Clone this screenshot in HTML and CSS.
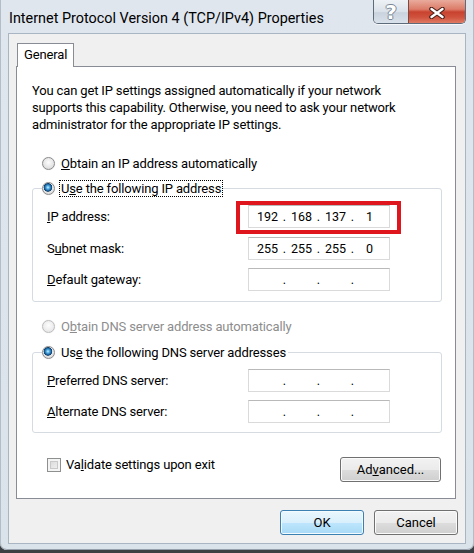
FILE: index.html
```html
<!DOCTYPE html>
<html lang="en">
<head>
    <meta charset="UTF-8">
    <meta name="viewport" content="width=device-width, initial-scale=1.0">
    <title>Internet Protocol Version 4 (TCP/IPv4) Properties</title>
    <link rel="stylesheet" href="styles.css">
</head>
<body>

<div class="window">
    <div class="titlebar">
        <span class="title">Internet Protocol Version 4 (TCP/IPv4) Properties</span>
        <div class="caption">
            <span class="cap-btn help">?</span>
            <span class="cap-btn close">
                <svg width="16" height="12" viewBox="0 0 16 12">
                    <path d="M2.5 2 L13.5 10 M13.5 2 L2.5 10" stroke="#4a1f19" stroke-width="4.6" stroke-linecap="round"/>
                    <path d="M2.5 2 L13.5 10 M13.5 2 L2.5 10" stroke="#fff" stroke-width="2.4" stroke-linecap="round"/>
                </svg>
            </span>
        </div>
    </div>

    <div class="client">
        <div class="tabs">
            <span class="tab">General</span>
        </div>

        <div class="panel">
            <p class="intro">You can get IP settings assigned automatically if your network<br>supports this capability. Otherwise, you need to ask your network<br>administrator for the appropriate IP settings.</p>

            <div class="option"><span class="radio"></span><span><u>O</u>btain an IP address automatically</span></div>

            <fieldset class="group">
                <legend class="legend"><span class="radio checked"></span><span class="focus">U<u>s</u>e the following IP address</span></legend>
                <div class="rows">
                    <div class="row">
                        <span><u>I</u>P address:</span>
                        <div class="ip marked"><span>192</span><i>.</i><span>168</span><i>.</i><span>137</span><i>.</i><span>1</span></div>
                    </div>
                    <div class="row">
                        <span>S<u>u</u>bnet mask:</span>
                        <div class="ip"><span>255</span><i>.</i><span>255</span><i>.</i><span>255</span><i>.</i><span>0</span></div>
                    </div>
                    <div class="row">
                        <span><u>D</u>efault gateway:</span>
                        <div class="ip"><span></span><i>.</i><span></span><i>.</i><span></span><i>.</i><span></span></div>
                    </div>
                </div>
            </fieldset>

            <div class="option option-dns disabled"><span class="radio"></span><span>O<u>b</u>tain DNS server address automatically</span></div>

            <fieldset class="group group-dns">
                <legend class="legend"><span class="radio checked"></span><span class="focus off">Us<u>e</u> the following DNS server addresses</span></legend>
                <div class="rows rows-dns">
                    <div class="row">
                        <span><u>P</u>referred DNS server:</span>
                        <div class="ip"><span></span><i>.</i><span></span><i>.</i><span></span><i>.</i><span></span></div>
                    </div>
                    <div class="row">
                        <span><u>A</u>lternate DNS server:</span>
                        <div class="ip"><span></span><i>.</i><span></span><i>.</i><span></span><i>.</i><span></span></div>
                    </div>
                </div>
            </fieldset>

            <div class="footer">
                <div class="check-label"><span class="checkbox"></span><span>Va<u>l</u>idate settings upon exit</span></div>
                <button class="btn advanced">Ad<u>v</u>anced...</button>
            </div>
        </div>

        <div class="actions">
            <button class="btn default">OK</button>
            <button class="btn">Cancel</button>
        </div>
    </div>
</div>

</body>
</html>
```

FILE: styles.css
```css
*, *::before, *::after {
    box-sizing: border-box;
}
html, body {
    margin: 0;
}
body {
    background-color: #3a3f44;
    font-family: Roboto, "Open Sans", sans-serif;
    font-size: 13px;
    letter-spacing: -0.15px;
    color: #000;
}
.window {
    width: 474px;
    height: 550px;
    padding: 0 8px 6px;
    display: flex;
    flex-direction: column;
    background: linear-gradient(to bottom, #dfe6ee, #dae2ea);
    border-radius: 0 0 7px 7px;
    box-shadow: inset 1px 0 0 #b3bdc8, inset -1px 0 0 #b3bdc8, inset 0 -1px 0 #95a0ac;
}

/* title bar */
.titlebar {
    height: 33px;
    display: flex;
    justify-content: space-between;
    align-items: flex-start;
}
.title {
    font-size: 14.4px;
    letter-spacing: 0;
    line-height: 20px;
    margin: 9px 0 0 1px;
}
.caption {
    display: flex;
    height: 24px;
    border: 1px solid #5d6b7b;
    border-top: 0;
    border-radius: 0 0 5px 5px;
    overflow: hidden;
    box-shadow: 0 1px 0 rgba(255, 255, 255, 0.7);
}
.cap-btn {
    display: flex;
    align-items: center;
    justify-content: center;
}
.help {
    width: 34px;
    background: linear-gradient(to bottom, #eef2f6, #dae1e9 50%, #c9d3de 55%, #d9e1ea);
    color: #fff;
    font: bold 20px "DejaVu Sans", sans-serif;
    text-shadow: 1px 0 #7a8694, -1px 0 #7a8694, 0 1px #7a8694, 0 -1px #7a8694;
    padding-top: 1px;
}
.close {
    width: 57px;
    border-left: 1px solid #7a4a44;
    background: linear-gradient(to bottom, #e9ab9c, #dc7c69 40%, #c9432f 52%, #cf523d 75%, #e07b63);
    padding-top: 2px;
}

/* client area */
.client {
    flex: 1;
    display: flex;
    flex-direction: column;
    background-color: #f0f0f0;
    border: 1px solid #a9b5c2;
    padding: 9px 7px 8px;
}
.tabs {
    display: flex;
    padding-left: 1px;
}
.tab {
    position: relative;
    z-index: 1;
    height: 24px;
    margin-bottom: -1px;
    padding: 2px 6px 0;
    line-height: 17px;
    background-color: #fff;
    border: 1px solid #898c95;
    border-bottom: 0;
}
.panel {
    margin-right: 2px;
    padding: 15px 13px 16px 15px;
    background-color: #fff;
    border: 1px solid #898c95;
}
.intro {
    margin: 0;
    line-height: 17px;
}

/* radios */
.option {
    display: flex;
    align-items: center;
    gap: 6px;
    height: 25px;
    padding-left: 10px;
    margin-top: 17.5px;
}
.option-dns {
    margin-top: 11.5px;
}
.disabled {
    color: #8d8d8d;
}
.radio {
    width: 13px;
    height: 13px;
    flex: none;
    border-radius: 50%;
    border: 1px solid #8b8b8b;
    background: radial-gradient(circle at 50% 40%, #fdfdfd, #e6e6e6 55%, #cfcfcf);
    box-shadow: 0 0 1px rgba(0, 0, 0, 0.15);
}
.disabled .radio {
    border-color: #bdbdbd;
    background: radial-gradient(circle at 50% 40%, #fdfdfd, #ececec 60%, #e0e0e0);
}
.radio.checked {
    background:
        radial-gradient(circle at 45% 40%, #d4f0ff 0, #58b2e6 1.5px, #1b64a0 3.2px, #0d3d6b 4px, transparent 4.6px),
        radial-gradient(circle at 50% 40%, #fdfdfd, #e6e6e6 55%, #cfcfcf);
}

/* group boxes */
.group {
    margin: 4.5px 0 0;
    padding: 8px 14px 10px;
    min-width: 0;
    border: 1px solid #d5dbe0;
    border-radius: 3px;
}
.group-dns {
    margin-top: 5px;
    padding: 8.5px 14px 9px;
}
.legend {
    display: flex;
    align-items: center;
    gap: 4px;
    padding: 0;
    margin-left: -5px;
}
.focus {
    line-height: 15px;
    padding: 0 1px;
    border: 1px dotted #000;
}
.focus.off {
    border-color: transparent;
}
.rows {
    display: flex;
    flex-direction: column;
    gap: 8.5px;
}
.rows-dns {
    gap: 8px;
}
.row {
    display: grid;
    grid-template-columns: 201px 142px;
    align-items: center;
}

/* ip address control */
.ip {
    position: relative;
    height: 23px;
    display: grid;
    grid-template-columns: 27px 7px 27px 7px 27px 7px 27px;
    align-items: center;
    padding-left: 5px;
    font-size: 12.5px;
    letter-spacing: 0;
    text-align: center;
    background-color: #fff;
    border: 1px solid #dadada;
    border-top-color: #b9b9b9;
}
.ip i {
    font-style: normal;
}
.ip.marked::after {
    content: "";
    position: absolute;
    left: -13px;
    top: -5px;
    width: 165px;
    height: 33px;
    border: 4px solid #e0161f;
}

/* footer */
.footer {
    display: flex;
    justify-content: space-between;
    align-items: flex-start;
    margin-top: 24px;
}
.check-label {
    display: flex;
    align-items: center;
    gap: 5px;
    height: 15px;
    padding-left: 15px;
}
.checkbox {
    width: 14px;
    height: 14px;
    border: 1px solid #8e8f8f;
    background: linear-gradient(135deg, #d4d4d4, #f6f6f6);
    box-shadow: inset 0 0 0 2px #f4f4f4, inset 0 0 0 3px #c9c9c9;
}
.btn {
    height: 25px;
    width: 84px;
    padding: 0;
    font-family: Roboto, "Open Sans", sans-serif;
    font-size: 13px;
    color: #000;
    border: 1px solid #707070;
    border-radius: 3px;
    background: linear-gradient(to bottom, #f2f2f2, #ebebeb 50%, #dddddd 51%, #cfcfcf);
    box-shadow: inset 0 0 0 1px #fbfbfb;
}
.advanced {
    width: 101px;
    margin-right: 1px;
}
.btn.default {
    border-color: #3c7fb1;
    background: linear-gradient(to bottom, #eaf6fd, #d9f0fc 50%, #bee6fd 51%, #a7d9f5);
    box-shadow: inset 0 0 0 1px #f3fbff;
}
.actions {
    display: flex;
    justify-content: flex-end;
    gap: 10px;
    margin-top: 11px;
}
```
